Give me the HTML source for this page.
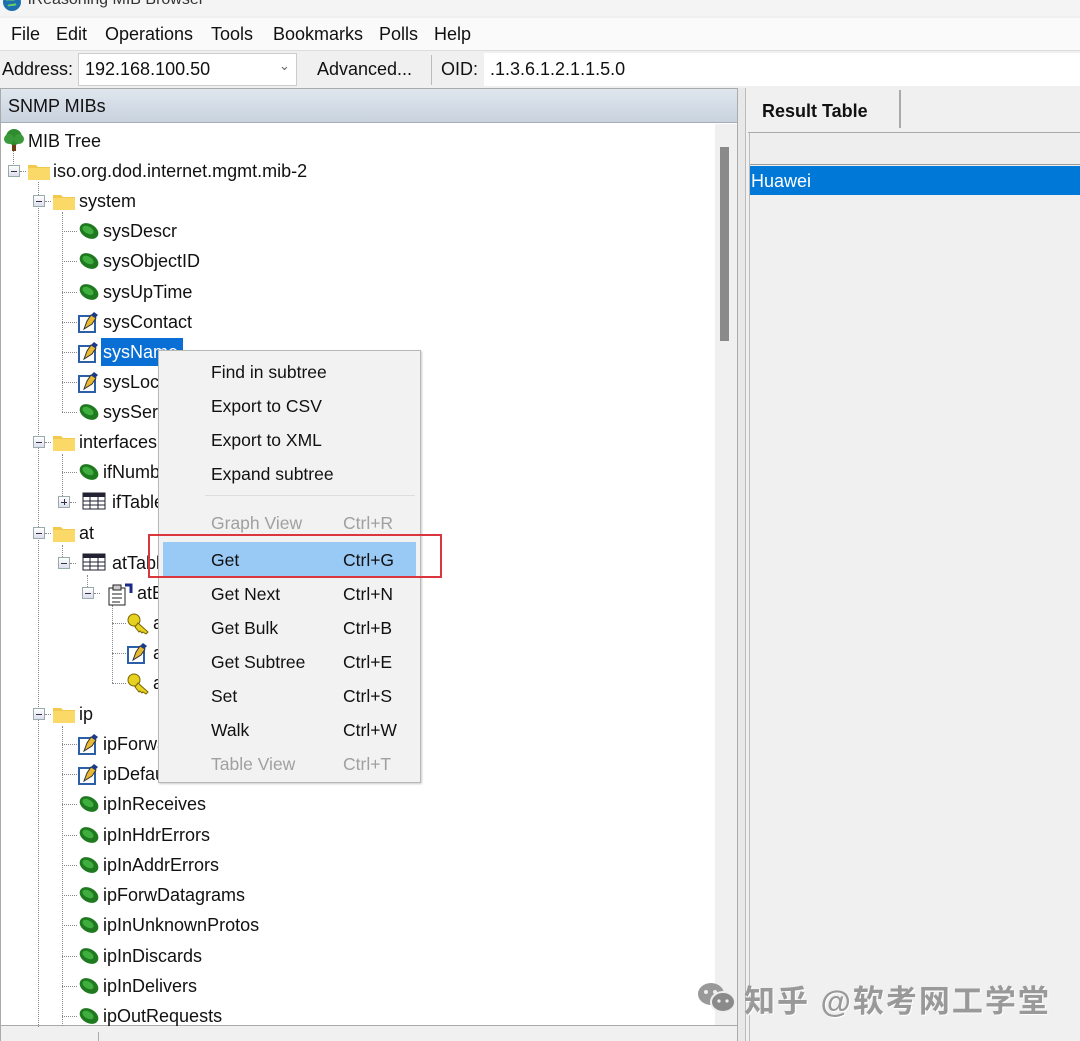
<!DOCTYPE html>
<html><head><meta charset="utf-8">
<style>
*{margin:0;padding:0;box-sizing:border-box}
body{width:1080px;height:1041px;overflow:hidden;background:#f0f0f0;font-family:"Liberation Sans","Noto Sans CJK SC",sans-serif;font-size:17px;color:#111;position:relative}
.a{position:absolute;white-space:nowrap}
.t{position:absolute;white-space:nowrap;line-height:20px;font-size:18px}
.ic{position:absolute}
.vl{position:absolute;border-left:1px dotted #888;width:0}
.hl{position:absolute;border-top:1px dotted #888;height:0}
.exp{position:absolute;width:12px;height:12px;border:1px solid #9aa;background:linear-gradient(#fff,#dde);}
.exp:before{content:"";position:absolute;left:2px;top:5px;width:6px;height:1px;background:#334}
.exp.p:after{content:"";position:absolute;left:5px;top:2px;width:1px;height:6px;background:#334}
.mi{position:absolute;left:52px;line-height:20px;font-size:17.5px}
.sc{position:absolute;left:184px;line-height:20px;font-size:17.5px}
.dis{color:#a0a0a0}
</style></head><body>
<div class="a" style="left:0;top:0;width:1080px;height:16px;background:#f4f4f4"></div>
<svg class="ic" style="left:2px;top:-8px" width="20" height="20"><circle cx="10" cy="10" r="9" fill="#1d6fb0"/><path d="M4 8c3-2 6 1 9-1M6 14c2-2 5 0 8-2" stroke="#6c6" stroke-width="2" fill="none"/></svg>
<div class="a" style="left:28px;top:-9px;font-size:16px;color:#333">iReasoning MIB Browser</div>
<div class="a" style="left:0;top:18px;width:1080px;height:33px;background:#fafafa;border-bottom:1px solid #ddd"></div>
<div class="a" style="left:11px;top:24px;font-size:18px">File</div>
<div class="a" style="left:56px;top:24px;font-size:18px">Edit</div>
<div class="a" style="left:105px;top:24px;font-size:18px">Operations</div>
<div class="a" style="left:211px;top:24px;font-size:18px">Tools</div>
<div class="a" style="left:273px;top:24px;font-size:18px">Bookmarks</div>
<div class="a" style="left:379px;top:24px;font-size:18px">Polls</div>
<div class="a" style="left:434px;top:24px;font-size:18px">Help</div>
<div class="a" style="left:2px;top:59px;font-size:18px">Address:</div>
<div class="a" style="left:78px;top:53px;width:219px;height:33px;background:#fff;border:1px solid #ccc"></div>
<div class="a" style="left:85px;top:59px;font-size:18px">192.168.100.50</div>
<div class="a" style="left:279px;top:58px;font-size:13px;color:#666">⌄</div>
<div class="a" style="left:317px;top:59px;font-size:18px">Advanced...</div>
<div class="a" style="left:431px;top:55px;width:1px;height:30px;background:#bbb"></div>
<div class="a" style="left:441px;top:59px;font-size:18px">OID:</div>
<div class="a" style="left:484px;top:53px;width:600px;height:33px;background:#fff"></div>
<div class="a" style="left:490px;top:59px;font-size:18px">.1.3.6.1.2.1.1.5.0</div>
<div class="a" style="left:0;top:88px;width:738px;height:953px;border:1px solid #aaa;background:#fff"></div>
<div class="a" style="left:1px;top:89px;width:736px;height:34px;background:linear-gradient(#dfe6ee,#c9d3de);border-bottom:1px solid #aab"></div>
<div class="a" style="left:8px;top:96px;font-size:18px">SNMP MIBs</div>
<div class="a" style="left:715px;top:124px;width:22px;height:902px;background:#f0f0f0"></div>
<div class="a" style="left:720px;top:147px;width:9px;height:194px;background:#8a8a8a"></div>
<div class="a" style="left:1px;top:1025px;width:736px;height:16px;background:#f0f0f0;border-top:1px solid #aaa"></div>
<div class="a" style="left:98px;top:1032px;width:1px;height:9px;background:#aaa"></div>
<div class="a" style="left:738px;top:88px;width:8px;height:953px;background:#e8e8e8;border-right:1px solid #bbb"></div>
<div class="a" style="left:748px;top:90px;width:153px;height:38px;background:#f0f0f0;border-right:2px solid #aaa"></div>
<div class="a" style="left:762px;top:101px;font-weight:bold;font-size:18px">Result Table</div>
<div class="a" style="left:748px;top:132px;width:332px;height:1px;background:#aaa"></div>
<div class="a" style="left:749px;top:133px;width:1px;height:908px;background:#bbb"></div>
<div class="a" style="left:750px;top:134px;width:330px;height:31px;background:#eee;border-bottom:1px solid #999"></div>
<div class="a" style="left:750px;top:166px;width:330px;height:29px;background:#0078d7"></div>
<div class="a" style="left:751px;top:171px;color:#fff;font-size:18px">Huawei</div>

<div class="vl" style="left:13px;top:150px;height:14px"></div>
<div class="vl" style="left:38px;top:182px;height:845px"></div>
<div class="vl" style="left:62px;top:212px;height:200px"></div>
<div class="vl" style="left:62px;top:454px;height:48px"></div>
<div class="vl" style="left:62px;top:545px;height:14px"></div>
<div class="vl" style="left:87px;top:575px;height:14px"></div>
<div class="vl" style="left:112px;top:605px;height:78px"></div>
<div class="vl" style="left:62px;top:726px;height:300px"></div>

<svg class="ic" style="left:2px;top:128px" width="24" height="24"><rect x="10" y="13" width="4" height="10" fill="#6b3d12"/><circle cx="12" cy="9" r="8" fill="#2e8b2e"/><circle cx="7" cy="11" r="5" fill="#3a9a3a"/><circle cx="17" cy="11" r="5" fill="#3a9a3a"/></svg>
<div class="t" style="left:28px;top:131px">MIB Tree</div>

<div id="tree"></div>
<script>
var rows=[
["iso.org.dod.internet.mgmt.mib-2",171,0,"f","m"],
["system",201,1,"f","m"],
["sysDescr",231,2,"l"],["sysObjectID",261,2,"l"],["sysUpTime",292,2,"l"],["sysContact",322,2,"p"],
["sysName",352,2,"p"],["sysLocation",382,2,"p"],["sysServices",412,2,"l"],
["interfaces",442,1,"f","m"],["ifNumber",472,2,"l"],["ifTable",502,2,"t","p"],
["at",533,1,"f","m"],["atTable",563,2,"t","m"],["atEntry",593,3,"e","m"],
["atIfIndex",623,4,"k"],["atPhysAddress",653,4,"p"],["atNetAddress",683,4,"k"],
["ip",714,1,"f","m"],["ipForwarding",744,2,"p"],["ipDefaultTTL",774,2,"p"],["ipInReceives",804,2,"l"],
["ipInHdrErrors",835,2,"l"],["ipInAddrErrors",865,2,"l"],["ipForwDatagrams",895,2,"l"],
["ipInUnknownProtos",925,2,"l"],["ipInDiscards",956,2,"l"],["ipInDelivers",986,2,"l"],["ipOutRequests",1016,2,"l"]];
var ic={
f:'<svg width="24" height="20"><path d="M1 4h8l2 2h12v13H1z" fill="#f2c94c"/><rect x="1" y="7" width="22" height="12" rx="1" fill="#fbd968"/></svg>',
l:'<svg width="22" height="20"><ellipse cx="11" cy="10" rx="10" ry="7" transform="rotate(30 11 10)" fill="#1f7a1f"/><ellipse cx="10" cy="9" rx="6" ry="3.5" transform="rotate(30 10 9)" fill="#3fae3f"/></svg>',
p:'<svg width="22" height="22"><rect x="1" y="4" width="16" height="16" fill="#fff" stroke="#2b5fa8" stroke-width="2"/><path d="M6 17l3-8 4-6 5 3-4 6z" fill="#e8b830" stroke="#333" stroke-width="1"/><path d="M13 3l3-3 4 3-3 3z" fill="#1a3a8a"/></svg>',
k:'<svg width="24" height="22"><circle cx="7" cy="7" r="6" fill="#e6d020" stroke="#776600"/><path d="M11 10l10 9-2 2-3-2-1 1-2-2-1 1-4-5z" fill="#e6d020" stroke="#776600"/></svg>',
t:'<svg width="24" height="18"><rect x="1" y="1" width="22" height="16" fill="#fff" stroke="#223"/><rect x="1" y="1" width="22" height="4" fill="#223"/><path d="M1 9h22M1 13h22M8 5v12M16 5v12" stroke="#223"/></svg>',
e:'<svg width="26" height="24"><rect x="2" y="5" width="16" height="17" fill="#fff" stroke="#222"/><rect x="6" y="2" width="8" height="5" fill="#ccc" stroke="#222"/><path d="M5 11h10M5 15h10M5 19h8" stroke="#222"/><path d="M18 2h6v8" stroke="#1a2a8a" stroke-width="3" fill="none"/></svg>'};
var ex=[8,33,58,82,107], icx=[27,52,78,107,127], tx=[53,79,103,137,153];
var h='';
rows.forEach(function(r){var y=r[1],lv=r[2],typ=r[3];
 var ix=icx[lv],tX=tx[lv];
 if(typ=='t'){ix=82;tX=112;}
 if(r[4]){h+='<div class="exp'+(r[4]=='p'?' p':'')+'" style="left:'+ex[lv]+'px;top:'+(y-6)+'px"></div><div class="hl" style="left:'+(ex[lv]+12)+'px;top:'+y+'px;width:6px"></div>';}
 else {var lx=[13,38,62,87,112][lv];h+='<div class="hl" style="left:'+lx+'px;top:'+y+'px;width:'+(ix-lx-1)+'px"></div>';}
 h+='<div class="ic" style="left:'+ix+'px;top:'+(y-10)+'px">'+ic[typ]+'</div>';
 if(r[0]=='sysName'){h+='<div class="a" style="left:101px;top:338px;width:82px;height:28px;background:#0a6fd4"></div>';}
 h+='<div class="t" style="left:'+tX+'px;top:'+(y-10)+'px;'+(r[0]=='sysName'?'color:#fff':'')+'">'+r[0]+'</div>';});
document.getElementById('tree').innerHTML=h;
</script>

<div class="a" style="left:158px;top:350px;width:263px;height:433px;background:#f2f2f2;border:1px solid #b8b8b8;box-shadow:1px 1px 2px rgba(0,0,0,.2);z-index:5">
 <div class="mi" style="top:11px">Find in subtree</div>
 <div class="mi" style="top:45px">Export to CSV</div>
 <div class="mi" style="top:79px">Export to XML</div>
 <div class="mi" style="top:113px">Expand subtree</div>
 <div class="a" style="left:46px;top:144px;width:210px;height:1px;background:#ddd"></div>
 <div class="mi dis" style="top:162px">Graph View</div><div class="sc dis" style="top:162px">Ctrl+R</div>
 <div class="a" style="left:4px;top:191px;width:253px;height:34px;background:#99c9f5"></div>
 <div class="mi" style="top:199px">Get</div><div class="sc" style="top:199px">Ctrl+G</div>
 <div class="mi" style="top:233px">Get Next</div><div class="sc" style="top:233px">Ctrl+N</div>
 <div class="mi" style="top:267px">Get Bulk</div><div class="sc" style="top:267px">Ctrl+B</div>
 <div class="mi" style="top:301px">Get Subtree</div><div class="sc" style="top:301px">Ctrl+E</div>
 <div class="mi" style="top:335px">Set</div><div class="sc" style="top:335px">Ctrl+S</div>
 <div class="mi" style="top:369px">Walk</div><div class="sc" style="top:369px">Ctrl+W</div>
 <div class="mi dis" style="top:403px">Table View</div><div class="sc dis" style="top:403px">Ctrl+T</div>
</div>
<div class="a" style="left:148px;top:534px;width:294px;height:44px;border:2px solid #d9363e;z-index:6"></div>

<svg class="ic" style="left:695px;top:980px;z-index:7" width="44" height="36"><ellipse cx="16" cy="14" rx="13" ry="11" fill="#999"/><ellipse cx="28" cy="22" rx="12" ry="10" fill="#8a8a8a" stroke="#eee" stroke-width="2"/><circle cx="11" cy="12" r="2" fill="#eee"/><circle cx="20" cy="12" r="2" fill="#eee"/><circle cx="24" cy="21" r="1.6" fill="#eee"/><circle cx="32" cy="21" r="1.6" fill="#eee"/></svg>
<div class="a" style="left:744px;top:976px;font-size:31px;letter-spacing:2px;color:#999;font-weight:bold;text-shadow:1px 1px 0 #fff;z-index:7">知乎 @软考网工学堂</div>
</body></html>
